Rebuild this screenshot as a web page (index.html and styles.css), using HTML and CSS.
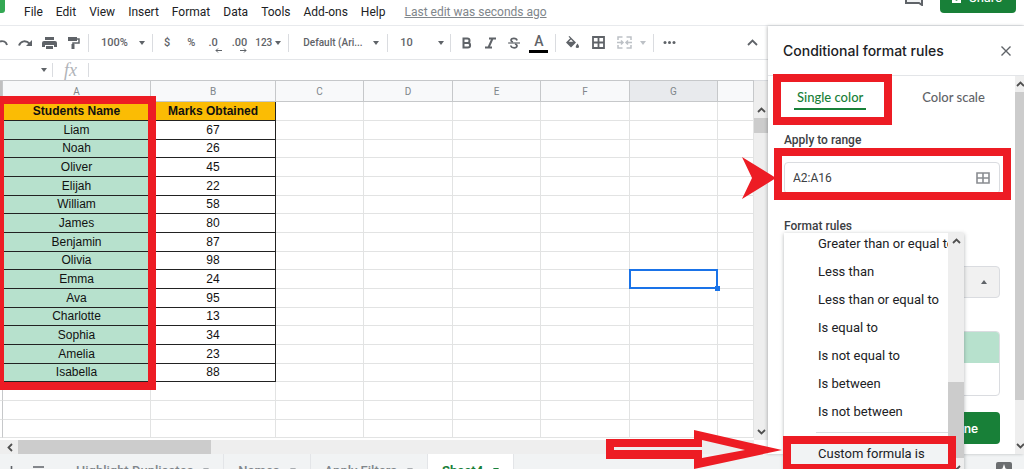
FILE: index.html
```html
<!DOCTYPE html>
<html lang="en">
<head>
  <meta charset="UTF-8">
  <title>Conditional format rules</title>
  <link rel="stylesheet" href="styles.css">
</head>
<body>
  <header class="topbar">
    <div class="logo"></div>
    <nav class="menus">
      <button>File</button>
      <button>Edit</button>
      <button>View</button>
      <button>Insert</button>
      <button>Format</button>
      <button>Data</button>
      <button>Tools</button>
      <button>Add-ons</button>
      <button>Help</button>
    </nav>
    <a class="last-edit" href="#">Last edit was seconds ago</a>
    <svg class="comment-icon" width="18" height="6" viewBox="0 0 18 6"><path d="M1 0v3h13l3 2V0" fill="#f1f3f4" stroke="#5f6368" stroke-width="2"/></svg>
    <button class="share">
      <svg width="9" height="11" viewBox="0 0 9 11"><path d="M0 4h9v7H0z" fill="#fff"/><path d="M2 4V2a2.500 2.500 0 0 1 5 0v2" fill="none" stroke="#fff"/><circle cx="4.500" cy="7.500" r="1.200" fill="#188038"/></svg>
      Share
    </button>
  </header>

  <main class="main">
    <section class="editor">
      <div class="toolbar">
        <svg class="undo" width="8" height="14" viewBox="0 0 8 14"><path d="M0 5.500C3 4.500 6 6 7 9" fill="none" stroke="#5f6368" stroke-width="2"/></svg>
        <svg class="redo" width="15" height="14" viewBox="0 0 15 14"><path d="M1 9.500C3 4.500 8 4 12 8" fill="none" stroke="#5f6368" stroke-width="2"/><path d="M14 4v6H8z" fill="#5f6368"/></svg>
        <svg class="print" width="15" height="14" viewBox="0 0 15 14"><path d="M3 1h9v3H3zM2 5h11q2 0 2 2v4h-3V9H3v2H0V7q0-2 2-2zM4 10h7v3H4z" fill="#5f6368"/></svg>
        <svg class="paint" width="13" height="14" viewBox="0 0 13 14"><path d="M1 1h9v4H1z" fill="#5f6368"/><path d="M10 3h2v4H6v2" fill="none" stroke="#5f6368" stroke-width="1.500"/><path d="M4.500 8h3v5h-3z" fill="#5f6368"/></svg>
        <span class="sep"></span>
        <button class="zoom">100%<i class="caret"></i></button>
        <span class="sep"></span>
        <button class="currency">$</button>
        <button class="percent">%</button>
        <button class="decimal">.0<svg width="7" height="5" viewBox="0 0 7 5"><path d="M7 2.500H1M3 .5l-2 2 2 2" fill="none" stroke="#5f6368"/></svg></button>
        <button class="decimal more-decimal">.00<svg width="7" height="5" viewBox="0 0 7 5"><path d="M0 2.500h6M4 .5l2 2-2 2" fill="none" stroke="#5f6368"/></svg></button>
        <button class="number">123<i class="caret"></i></button>
        <span class="sep"></span>
        <button class="font">Default (Ari...<i class="caret"></i></button>
        <span class="sep"></span>
        <button class="size">10<i class="caret"></i></button>
        <span class="sep"></span>
        <svg class="bold" width="10" height="12" viewBox="0 0 10 12"><path d="M1.500 1.500h3.800a2.200 2.200 0 0 1 0 4.400H1.500zM1.500 5.900h4.300a2.300 2.300 0 0 1 0 4.600H1.500z" fill="none" stroke="#5f6368" stroke-width="2"/></svg>
        <svg class="italic" width="11" height="12" viewBox="0 0 11 12"><path d="M4 1.500h7M0 10.500h7M7.500 1.500l-4 9" fill="none" stroke="#5f6368" stroke-width="2"/></svg>
        <svg class="strike" width="12" height="12" viewBox="0 0 12 12"><path d="M0 6h12" stroke="#5f6368" stroke-width="1.200"/><path d="M9 3.500C8.500.5 3 .8 3 3.200 3 4.500 4 4.800 5 5M7 7c3 .8 2.500 3.800-.8 3.800C4 10.800 3 10 2.800 8.500" fill="none" stroke="#5f6368" stroke-width="1.700"/></svg>
        <button class="text-color">A</button>
        <span class="sep"></span>
        <svg class="fill" width="13" height="13" viewBox="0 0 13 13"><path d="M3.500 0l6.500 6.500L5 11.500 0 6.500 4.200 2.300 2.500.8z" fill="#5f6368"/><path d="M2.800 5.800L5 3.600l2.200 2.200z" fill="#fff"/><path d="M11.400 7.500q-3.400 4.500 0 4.500t0-4.500z" fill="#5f6368"/></svg>
        <svg class="borders" width="13" height="13" viewBox="0 0 13 13"><path d="M1 1h11v11H1zM6.500 1v11M1 6.500h11" fill="none" stroke="#5f6368" stroke-width="1.800"/></svg>
        <svg class="merge" width="15" height="13" viewBox="0 0 15 13"><path d="M5.500 1H1v3M9.500 1H14v3M5.500 12H1V9M9.500 12H14V9M0 6.500h5.500M4 4.500l2 2-2 2M15 6.500H9.500M11 4.500l-2 2 2 2" fill="none" stroke="#bdc1c6" stroke-width="1.500"/></svg>
        <i class="caret faded"></i>
        <span class="sep"></span>
        <svg class="more" width="13" height="3" viewBox="0 0 13 3"><circle cx="2" cy="1.500" r="1.500" fill="#5f6368"/><circle cx="6.500" cy="1.500" r="1.500" fill="#5f6368"/><circle cx="11" cy="1.500" r="1.500" fill="#5f6368"/></svg>
        <svg class="collapse" width="11" height="7" viewBox="0 0 11 7"><path d="M1 6l4.500-4.500L10 6" fill="none" stroke="#5f6368" stroke-width="1.800"/></svg>
      </div>

      <div class="formula-bar">
        <i class="caret small"></i>
        <span class="bar"></span>
        <span class="fx">fx</span>
        <span class="bar"></span>
      </div>

      <div class="sheet-area">
        <div class="sheet">
          <table class="grid" id="grid">
            <colgroup>
              <col class="col-num"><col class="col-a"><col class="col-b">
              <col class="col"><col class="col"><col class="col"><col class="col"><col class="col">
              <col>
            </colgroup>
            <thead>
              <tr><th class="corner"></th><th>A</th><th>B</th><th>C</th><th>D</th><th>E</th><th>F</th><th class="active">G</th><th></th></tr>
            </thead>
            <tbody id="rows"></tbody>
          </table>
          <div class="mark mark-names"></div>
        </div>
        <div class="vscroll">
          <svg width="9" height="6" viewBox="0 0 9 6"><path d="M1 5l3.500-3.500L8 5" fill="none" stroke="#505050" stroke-width="1.800"/></svg>
          <div class="thumb"></div>
          <svg class="down" width="9" height="6" viewBox="0 0 9 6"><path d="M1 1l3.500 3.500L8 1" fill="none" stroke="#505050" stroke-width="1.800"/></svg>
        </div>
      </div>

      <div class="hscroll">
        <div class="track">
          <svg width="6" height="9" viewBox="0 0 6 9"><path d="M5 1L1.500 4.500 5 8" fill="none" stroke="#505050" stroke-width="1.800"/></svg>
          <div class="thumb"></div>
        </div>
      </div>
    </section>

    <aside class="panel">
      <div class="panel-head">
        <h2>Conditional format rules</h2>
        <button class="close" aria-label="Close"><svg width="10" height="10" viewBox="0 0 10 10"><path d="M.5.5l9 9M9.500.5l-9 9" stroke="#5f6368" stroke-width="1.400"/></svg></button>
      </div>
      <div class="panel-body">
        <div class="form">
          <div class="tabs">
            <button class="tab selected">Single color</button>
            <button class="tab">Color scale</button>
          </div>
          <label class="label" for="range">Apply to range</label>
          <div class="range">
            <input id="range" type="text" value="A2:A16">
            <svg width="14" height="12" viewBox="0 0 14 12"><path d="M1 1h12v10H1zM7 1v10M1 6h12" fill="none" stroke="#8a8d91" stroke-width="1.600"/></svg>
          </div>
          <div class="label rules-label">Format rules</div>
          <button class="condition" aria-label="Condition"><i class="caret up"></i></button>
          <div class="preview"><div class="swatch"></div></div>
          <button class="done">Done</button>
        </div>
        <div class="pscroll">
          <svg width="9" height="6" viewBox="0 0 9 6"><path d="M2 5l3.500-3.500L9 5" fill="none" stroke="#505050" stroke-width="1.800"/></svg>
          <div class="thumb"></div>
          <svg class="down" width="9" height="6" viewBox="0 0 9 6"><path d="M2 1l3.500 3.500L9 1" fill="none" stroke="#505050" stroke-width="1.800"/></svg>
        </div>
      </div>

      <div class="dropdown">
        <ul class="options">
          <li>Greater than or equal to</li>
          <li>Less than</li>
          <li>Less than or equal to</li>
          <li>Is equal to</li>
          <li>Is not equal to</li>
          <li>Is between</li>
          <li>Is not between</li>
          <li class="custom">Custom formula is</li>
        </ul>
        <div class="dscroll">
          <svg width="9" height="6" viewBox="0 0 9 6"><path d="M1 5l3.500-3.500L8 5" fill="none" stroke="#505050" stroke-width="1.800"/></svg>
          <div class="thumb"></div>
          <svg class="down" width="9" height="6" viewBox="0 0 9 6"><path d="M1 1l3.500 3.500L8 1" fill="none" stroke="#505050" stroke-width="1.800"/></svg>
        </div>
      </div>

      <div class="mark mark-tab"></div>
      <div class="mark mark-range"></div>
      <div class="mark mark-custom"></div>
      <svg class="pointer" width="34" height="42" viewBox="0 0 34 42"><path d="M0 0l34 21L0 42l10-21z" fill="#ed1c24"/></svg>
      <svg class="arrow" width="176" height="39" viewBox="0 0 176 39"><path fill-rule="evenodd" d="M0 9h88V0l88 20-88 19v-10H0zM8 17v3h88v8l43-8-43-10v7z" fill="#ed1c24"/></svg>
    </aside>
  </main>

  <footer class="sheets">
    <div class="sheet-tools">
      <svg width="11" height="11" viewBox="0 0 11 11"><path d="M5.500 0v11M0 5.500h11" stroke="#5f6368" stroke-width="1.600"/></svg>
      <svg width="11" height="9" viewBox="0 0 11 9"><path d="M0 1h11M0 4.500h11M0 8h11" stroke="#5f6368" stroke-width="1.600"/></svg>
    </div>
    <button class="sheet-tab">Highlight Duplicates<i class="caret"></i></button>
    <button class="sheet-tab">Names<i class="caret"></i></button>
    <button class="sheet-tab">Apply Filters<i class="caret"></i></button>
    <button class="sheet-tab current">Sheet4<i class="caret"></i></button>
    <svg class="explore" width="16" height="14" viewBox="0 0 16 14"><path d="M0 2q0-2 2-2h12q2 0 2 2v12H0z" fill="#6b6e70"/><path d="M8 2l1.500 4.500L14 8l-4.500 1.500L8 14 6.500 9.500 2 8l4.500-1.500z" fill="#fff"/></svg>
  </footer>

  <script>
    const marks = [
      ["Students Name", "Marks Obtained"],
      ["Liam", 67], ["Noah", 26], ["Oliver", 45], ["Elijah", 22],
      ["William", 58], ["James", 80], ["Benjamin", 87], ["Olivia", 98],
      ["Emma", 24], ["Ava", 95], ["Charlotte", 13], ["Sophia", 34],
      ["Amelia", 23], ["Isabella", 88]
    ];
    const rowCount = 18;
    let html = "";
    for (let i = 0; i < rowCount; i++) {
      const row = marks[i];
      const type = i === 0 ? "title" : "data";
      html += "<tr><td class='num'></td>";
      html += row
        ? `<td class="${type} name">${row[0]}</td><td class="${type}">${row[1]}</td>`
        : "<td></td><td></td>";
      for (let j = 0; j < 6; j++) {
        html += i === 9 && j === 4 ? "<td class='cursor'></td>" : "<td></td>";
      }
      html += "</tr>";
    }
    document.getElementById("rows").innerHTML = html;
  </script>
</body>
</html>
```
FILE: styles.css
```css
* {
  box-sizing: border-box;
}
body {
  margin: 0;
  height: 100vh;
  display: flex;
  flex-direction: column;
  overflow: hidden;
  background: #fff;
  color: #3c4043;
  font-family: Roboto, "Liberation Sans", sans-serif;
  font-size: 12px;
}
button {
  margin: 0;
  padding: 0;
  border: 0;
  background: none;
  color: inherit;
  font: inherit;
  white-space: nowrap;
}
svg {
  display: block;
  flex: none;
}
.caret {
  display: inline-block;
  flex: none;
  border: 3px solid transparent;
  border-top: 4px solid #5f6368;
  border-bottom: 0;
}
.caret.faded {
  border-top-color: #bdc1c6;
}
.caret.up {
  border-top: 0;
  border-bottom: 4px solid #5f6368;
}

/* top bar */
.topbar {
  display: flex;
  height: 26px;
  flex: none;
  align-items: flex-start;
  border-bottom: 1px solid #e8eaed;
  padding-right: 8px;
}
.logo {
  width: 5px;
  height: 13px;
  background: #34a853;
  border-radius: 0 0 3px 0;
}
.menus {
  display: flex;
  gap: 13px;
  margin-left: 19px;
  line-height: 24px;
  color: #202124;
}
.last-edit {
  margin-left: 19px;
  line-height: 24px;
  color: #80868b;
}
.comment-icon {
  margin-left: auto;
}
.share {
  display: flex;
  align-items: center;
  gap: 8px;
  width: 76px;
  height: 32px;
  margin: -19px 0 0 17px;
  padding-left: 12px;
  border-radius: 4px;
  background: #188038;
  color: #fff;
  font-family: Inter, sans-serif;
  font-weight: 500;
}

.main {
  display: flex;
  flex: 1;
  min-height: 0;
}
.editor {
  display: flex;
  flex: 1;
  flex-direction: column;
  min-width: 0;
}

/* toolbar */
.toolbar {
  display: flex;
  align-items: center;
  height: 34px;
  flex: none;
  padding-right: 10px;
  border-bottom: 1px solid #e3e5e8;
  color: #5f6368;
  font-size: 11px;
  font-weight: 500;
}
.toolbar button {
  display: flex;
  align-items: center;
}
.sep {
  width: 1px;
  height: 18px;
  flex: none;
  background: #dadce0;
}
.redo {
  margin-left: 10px;
}
.print {
  margin-left: 9px;
}
.paint {
  margin: 0 8px 0 10px;
}
.zoom {
  width: 63px;
  padding: 0 7px 0 12px;
  justify-content: space-between;
}
.currency {
  margin-left: 11px;
}
.percent {
  margin-left: 17px;
}
.decimal {
  position: relative;
  margin-left: 13px;
}
.decimal svg {
  position: absolute;
  right: -4px;
  bottom: -4px;
}
.more-decimal {
  margin-left: 14px;
}
.more-decimal svg {
  right: 0;
}
.number {
  margin: 0 7px 0 8px;
  gap: 3px;
}
.toolbar .number,
.toolbar .font {
  font-size: 10px;
}
.font {
  width: 98px;
  padding: 0 8px 0 14px;
  justify-content: space-between;
}
.size {
  width: 62px;
  padding: 0 6px 0 12px;
  justify-content: space-between;
}
.bold {
  margin-left: 11px;
}
.italic {
  margin-left: 13px;
}
.strike {
  margin-left: 12px;
}
.toolbar .text-color {
  width: 19px;
  height: 20px;
  margin: 0 7px 0 9px;
  justify-content: center;
  border-bottom: 3px solid #000;
  font-size: 14px;
}
.fill {
  margin-left: 10px;
}
.borders {
  margin-left: 13px;
}
.merge {
  margin: 0 8px 0 12px;
}
.faded {
  margin-right: 7px;
}
.more {
  margin-left: 9px;
}
.collapse {
  margin-left: auto;
}

.formula-bar {
  display: flex;
  align-items: center;
  height: 20px;
  flex: none;
  padding-left: 41px;
}
.small {
  margin-right: 5px;
}
.bar {
  width: 1px;
  height: 14px;
  background: #dadce0;
}
.fx {
  width: 35px;
  text-align: center;
  color: #b0b3b8;
  font: italic 18px/20px "Liberation Serif", serif;
}

/* cells */
.sheet-area {
  display: flex;
  flex: 1;
  min-height: 0;
}
.sheet {
  position: relative;
  flex: 1;
  min-width: 0;
  overflow: hidden;
}
.grid {
  width: 100%;
  table-layout: fixed;
  border-collapse: separate;
  border-spacing: 0;
}
.col-num {
  width: 3px;
}
.col-a {
  width: 148px;
}
.col-b {
  width: 125px;
}
.col {
  width: 88px;
}
.col:nth-child(5),
.col:nth-child(7) {
  width: 89px;
}
.grid th {
  height: 22px;
  padding: 0;
  border: 1px solid #c6c8ca;
  border-width: 1px 1px 1px 0;
  background: #f8f9fa;
  color: #80868b;
  font-size: 10px;
  font-weight: 400;
}
.grid .corner {
  background: #c0c0c0;
}
.grid .active {
  background: #e8eaed;
}
.grid td {
  height: 19px;
  padding: 0;
  border: 1px solid #e2e3e3;
  border-width: 0 1px 1px 0;
  font: 12px/17px "Liberation Sans", Arial, sans-serif;
  color: #111;
  text-align: center;
}
.grid tr:nth-child(3n) td {
  height: 18px;
}
.grid .num {
  border-right-color: #c6c8ca;
}
.grid .data,
.grid .title {
  border-color: #222;
}
.grid .name {
  background: #b7e1cd;
}
.grid .title {
  background: #fbbc04;
  font-weight: bold;
}
.grid .cursor {
  position: relative;
}
.cursor::before {
  content: "";
  position: absolute;
  inset: -1px;
  border: 2px solid #1a73e8;
}
.cursor::after {
  content: "";
  position: absolute;
  right: -3px;
  bottom: -3px;
  width: 5px;
  height: 5px;
  background: #1a73e8;
}

/* scrollbars */
.vscroll,
.pscroll,
.dscroll {
  display: flex;
  flex-direction: column;
  align-items: center;
  flex: none;
  background: #eee;
}
.vscroll {
  width: 14px;
  padding: 26px 0 5px;
  border-top: 1px solid #dadce0;
}
.vscroll .thumb {
  width: 100%;
  height: 15px;
  margin-top: 5px;
  background: #ccc;
}
.down {
  margin-top: auto;
}
.hscroll {
  height: 14px;
  flex: none;
  padding-right: 14px;
}
.track {
  display: flex;
  align-items: center;
  height: 14px;
  padding-left: 7px;
  background: #eee;
}
.track .thumb {
  width: 193px;
  height: 14px;
  margin-left: 5px;
  background: #ccc;
}

/* side panel */
.panel {
  position: relative;
  z-index: 2;
  display: flex;
  flex: none;
  flex-direction: column;
  width: 256px;
  background: #fff;
  box-shadow: -1px 0 3px rgba(60, 64, 67, 0.3);
}
.panel-head {
  display: flex;
  align-items: center;
  justify-content: space-between;
  height: 50px;
  padding: 0 13px 0 15px;
  border-bottom: 1px solid #e3e5e8;
}
.panel-head h2 {
  margin: 0;
  color: #202124;
  font: 500 14px Inter, sans-serif;
}
.panel-body {
  display: flex;
  flex: 1;
  min-height: 0;
}
.form {
  display: flex;
  flex: 1;
  flex-direction: column;
  padding: 4px 15px 0 16px;
}
.tabs {
  display: flex;
  gap: 53px;
  padding-left: 10px;
}
.tab {
  height: 30px;
  padding: 6px 3px 0;
  border-bottom: 2px solid transparent;
  color: #5f6368;
  font: 500 13px/20px Lato, sans-serif;
}
.selected {
  border-bottom-color: #188038;
  color: #188038;
}
.label {
  margin-top: 20px;
  font-weight: 500;
  line-height: 20px;
}
.range {
  display: flex;
  align-items: center;
  height: 32px;
  margin-top: 12px;
  padding: 0 9px 0 8px;
  border: 1px solid #dadce0;
  border-radius: 4px;
}
.range input {
  flex: 1;
  min-width: 0;
  padding: 0;
  border: 0;
  outline: 0;
  color: #3c4043;
  font: 12px Roboto, sans-serif;
}
.rules-label {
  margin-top: 22px;
}
.condition {
  display: flex;
  align-items: center;
  justify-content: flex-end;
  height: 32px;
  flex: none;
  margin-top: 30px;
  padding-right: 12px;
  border: 1px solid #dadce0;
  border-radius: 4px;
  background: #f1f1f1;
}
.preview {
  height: 65px;
  flex: none;
  margin-top: 33px;
  border: 1px solid #dadce0;
  border-radius: 4px;
}
.swatch {
  height: 31px;
  border-radius: 3px 3px 0 0;
  background: #b7e1cd;
}
.done {
  align-self: flex-end;
  width: 72px;
  height: 32px;
  flex: none;
  margin-top: 16px;
  padding-right: 2px;
  border-radius: 4px;
  background: #188038;
  color: #fff;
  font: 600 12px Inter, sans-serif;
}
.pscroll {
  width: 9px;
  padding: 5px 0;
  overflow: hidden;
}
.pscroll .thumb {
  width: 100%;
  height: 308px;
  margin-top: 5px;
  background: #ccc;
}

.dropdown {
  position: absolute;
  top: 207px;
  left: 16px;
  display: flex;
  width: 180px;
  height: 242px;
  overflow: hidden;
  background: #fff;
  box-shadow: 0 1px 4px rgba(60, 64, 67, 0.4);
}
.options {
  flex: 1;
  min-width: 0;
  margin: 0;
  padding: 0;
  list-style: none;
  overflow: hidden;
  color: #202124;
  font-size: 13px;
  line-height: 28px;
  white-space: nowrap;
}
.options li {
  height: 28px;
  padding-left: 34px;
}
.options li:first-child {
  margin-top: -3px;
}
.options .custom {
  position: relative;
  margin-top: 14px;
  background: #f1f3f4;
}
.custom::before {
  content: "";
  position: absolute;
  top: -8px;
  left: 32px;
  right: 0;
  border-top: 1px solid #dadce0;
}
.dscroll {
  width: 16px;
  padding: 5px 0 4px;
}
.dscroll .thumb {
  width: 100%;
  height: 76px;
  margin-top: 138px;
  background: #ccc;
}

/* red highlights */
.mark {
  position: absolute;
  border: 8px solid #ed1c24;
}
.mark-names {
  top: 16px;
  left: -4px;
  width: 160px;
  height: 294px;
}
.mark-tab {
  top: 48px;
  left: 5px;
  width: 119px;
  height: 51px;
}
.mark-range {
  top: 122px;
  left: 6px;
  width: 237px;
  height: 52px;
}
.mark-custom {
  top: 410px;
  left: 15px;
  width: 173px;
  height: 36px;
}
.pointer {
  position: absolute;
  top: 131px;
  left: -26px;
}
.arrow {
  position: absolute;
  top: 404px;
  left: -162px;
}

/* sheet tabs */
.sheets {
  display: flex;
  align-items: flex-start;
  height: 15px;
  flex: none;
  overflow: hidden;
  background: #f1f3f4;
}
.sheet-tools {
  display: flex;
  gap: 16px;
  width: 62px;
  padding: 12px 0 0 6px;
}
.sheet-tab {
  display: flex;
  align-items: center;
  gap: 10px;
  height: 32px;
  padding: 0 14px;
  border-right: 1px solid #e3e5e8;
  color: #80868b;
  font: 500 13px Roboto, sans-serif;
}
.sheet-tab .caret {
  border-top-color: #a8acb0;
}
.current {
  background: #fff;
  color: #188038;
  font-weight: 700;
}
.current .caret {
  border-top-color: #188038;
}
.explore {
  margin: 8px 12px 0 auto;
}
```
